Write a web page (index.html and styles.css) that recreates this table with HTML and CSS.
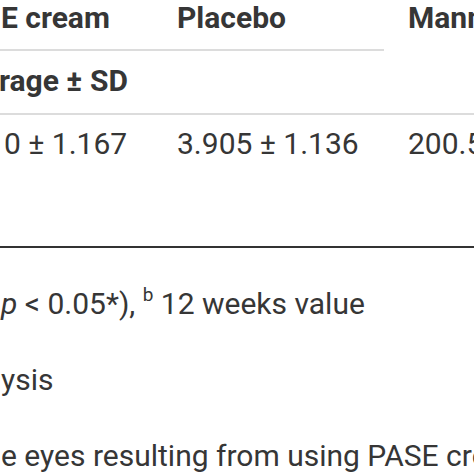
FILE: index.html
```html
<!DOCTYPE html>
<html>
<head>
<meta charset="utf-8">
<link rel="stylesheet" href="styles.css">
</head>
<body>
<div class="page">
  <div class="table">
    <div class="row head">
      <div class="cell c1 grp"><span class="t-e">E cream</span></div>
      <div class="cell c2 grp">Placebo</div>
      <div class="cell c3">Mann-Whitney U</div>
    </div>
    <div class="row section">
      <div class="cell span"><span class="t-avg">rage ± SD</span></div>
    </div>
    <div class="row data">
      <div class="cell c1"><span class="t-val">0 ± 1.167</span></div>
      <div class="cell c2">3.905 ± 1.136</div>
      <div class="cell c3">200.5</div>
    </div>
  </div>
  <div class="notes">
    <p class="note"><i class="p">p</i> &lt; 0.05*), <sup class="sup">b</sup> 12 weeks value</p>
    <p class="note">ysis</p>
    <p class="note">e eyes resulting from using PASE cream</p>
  </div>
</div>
</body>
</html>
```

FILE: styles.css
```css
html, body {
  margin: 0;
  padding: 0;
  background: #ffffff;
}
body {
  width: 474px;
  height: 474px;
  overflow: hidden;
}
.page {
  font-family: Roboto, "Liberation Sans", sans-serif;
  font-size: 30px;
  line-height: 36px;
  color: #363636;
  white-space: nowrap;
}
.table {
  display: flex;
  flex-direction: column;
  border-bottom: 2px solid #333333;
}
.row {
  display: grid;
  grid-template-columns: 177px 207px 1fr;
}
.head .cell {
  font-weight: 700;
  padding-bottom: 13px;
}
.head .grp {
  border-bottom: 2px solid #dcdcdc;
}
.head .c3 {
  padding-left: 24px;
}
.t-e {
  padding-left: 1px;
}
.section {
  border-bottom: 2px solid #dcdcdc;
}
.section .span {
  grid-column: 1 / 4;
  font-weight: 700;
  padding-top: 12px;
  padding-bottom: 14px;
}
.t-avg {
  margin-left: -1px;
}
.data .cell {
  padding-top: 11px;
  padding-bottom: 84px;
}
.data .c3 {
  padding-left: 24px;
}
.t-val {
  padding-left: 4px;
}
.notes {
  display: flex;
  flex-direction: column;
  gap: 40px;
  padding-top: 38px;
}
.note {
  margin: 0;
  padding-left: 1px;
}
.p {
  font-style: italic;
}
.sup {
  font-size: 19px;
  line-height: 0;
  vertical-align: 13px;
}
```
